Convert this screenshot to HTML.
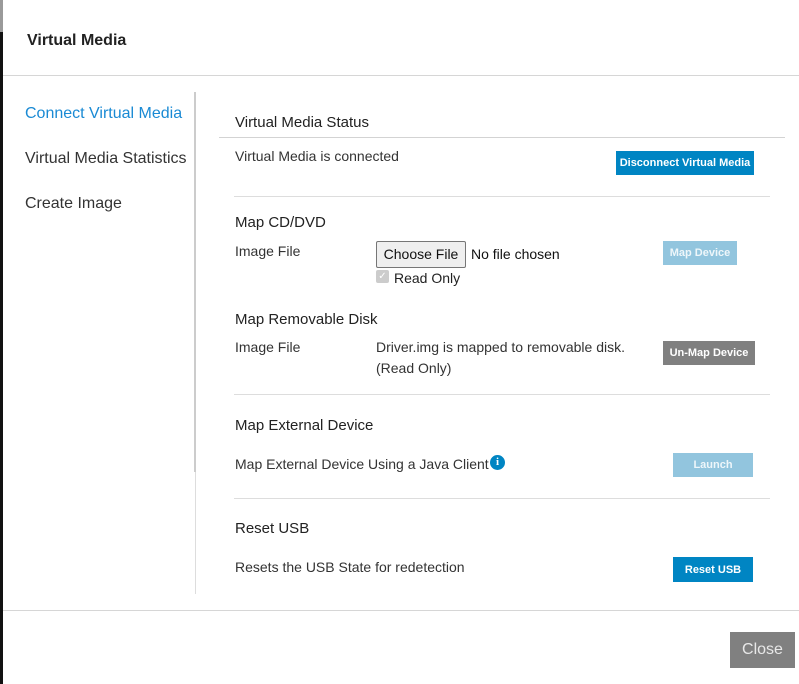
<!DOCTYPE html>
<html><head><meta charset="utf-8"><style>
*{margin:0;padding:0;box-sizing:border-box}
body{width:799px;height:684px;background:#fff;position:relative;overflow:hidden;font-family:"Liberation Sans",Arial,sans-serif;color:#333}
.a{position:absolute;white-space:nowrap}
.hl{position:absolute;height:1px;background:#ddd}
.btn{position:absolute;color:#fff;font-size:11px;font-weight:bold;display:flex;align-items:center;justify-content:center}
.nav{font-size:16px;color:#333}
.h{font-size:15px;color:#222}
.t{font-size:14px;color:#333}
</style></head><body>
<div class="a" style="left:0;top:0;width:3px;height:32px;background:#9a9a9a"></div>
<div class="a" style="left:0;top:32px;width:3px;height:652px;background:#111"></div>
<div class="a" style="left:27px;top:32px;font-size:16px;font-weight:bold;color:#222">Virtual Media</div>
<div class="hl" style="left:3px;top:75px;width:796px;background:#d6d6d6"></div>
<div class="a nav" style="left:25px;top:105px;color:#1a8ad4">Connect Virtual Media</div>
<div class="a nav" style="left:25px;top:150px">Virtual Media Statistics</div>
<div class="a nav" style="left:25px;top:195px">Create Image</div>
<div class="a" style="left:194px;top:92px;width:2px;height:380px;background:#ccc"></div>
<div class="a" style="left:195px;top:472px;width:1px;height:122px;background:#ddd"></div>

<div class="a h" style="left:235px;top:114px">Virtual Media Status</div>
<div class="hl" style="left:219px;top:137px;width:566px;background:#d3d3d3"></div>
<div class="a t" style="left:235px;top:148px">Virtual Media is connected</div>
<div class="btn" style="left:616px;top:151px;width:138px;height:24px;background:#0085c3">Disconnect Virtual Media</div>
<div class="hl" style="left:234px;top:196px;width:536px"></div>

<div class="a h" style="left:235px;top:214px">Map CD/DVD</div>
<div class="a t" style="left:235px;top:243px">Image File</div>
<div class="a" style="left:376px;top:241px;width:90px;height:27px;border:1px solid #767676;border-radius:2px;background:#efefef;font-size:14px;color:#111;text-align:center;line-height:25px">Choose File</div>
<div class="a t" style="left:471px;top:246px;color:#111">No file chosen</div>
<div class="a" style="left:376px;top:270px;width:13px;height:13px;background:#ccc;border-radius:2px;color:#fff;font-size:10px;line-height:13px;text-align:center">✓</div>
<div class="a t" style="left:394px;top:270px;color:#222">Read Only</div>
<div class="btn" style="left:663px;top:241px;width:74px;height:24px;background:#92c5de;color:#eef6fa">Map Device</div>

<div class="a h" style="left:235px;top:311px">Map Removable Disk</div>
<div class="a t" style="left:235px;top:339px">Image File</div>
<div class="a t" style="left:376px;top:339px">Driver.img is mapped to removable disk.</div>
<div class="a t" style="left:376px;top:360px">(Read Only)</div>
<div class="btn" style="left:663px;top:341px;width:92px;height:24px;background:#808080">Un-Map Device</div>
<div class="hl" style="left:234px;top:394px;width:536px"></div>

<div class="a h" style="left:235px;top:417px">Map External Device</div>
<div class="a t" style="left:235px;top:456px">Map External Device Using a Java Client</div>
<div class="a" style="left:490px;top:455px;width:15px;height:15px;border-radius:50%;background:#0085c3;color:#fff;font-size:11px;font-weight:bold;text-align:center;line-height:15px;font-family:'Liberation Serif',serif">i</div>
<div class="btn" style="left:673px;top:453px;width:80px;height:24px;background:#92c5de;color:#eef6fa">Launch</div>
<div class="hl" style="left:234px;top:498px;width:536px"></div>

<div class="a h" style="left:235px;top:520px">Reset USB</div>
<div class="a t" style="left:235px;top:559px">Resets the USB State for redetection</div>
<div class="btn" style="left:673px;top:557px;width:80px;height:25px;background:#0085c3">Reset USB</div>

<div class="hl" style="left:3px;top:610px;width:796px;background:#d6d6d6"></div>
<div class="btn" style="left:730px;top:632px;width:65px;height:36px;background:#808080;font-size:16px;font-weight:normal;color:#e8e8e8">Close</div>
</body></html>
